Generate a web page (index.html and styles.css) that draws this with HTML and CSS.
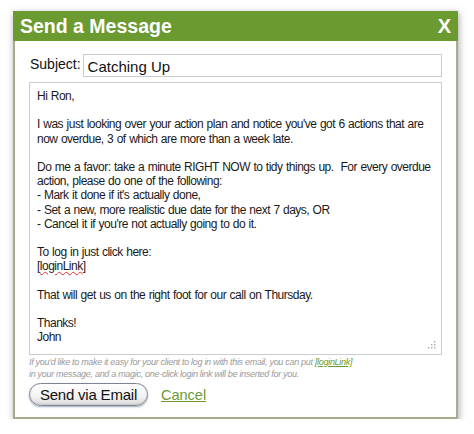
FILE: index.html
```html
<!DOCTYPE html>
<html lang="en">
<head>
    <meta charset="UTF-8">
    <title>Send a Message</title>
    <link rel="stylesheet" href="styles.css">
</head>
<body>

    <div class="dialog">
        <div class="dialog-header">
            <span class="dialog-title">Send a Message</span>
            <span class="dialog-close">X</span>
        </div>

        <div class="dialog-body">
            <div class="subject-row">
                <label class="subject-label">Subject:</label>
                <div class="subject-input">Catching Up</div>
            </div>

            <div class="message-box">
                <p>Hi Ron,</p>
                <p>I was just looking over your action plan and notice you've got 6 actions that are now overdue, 3 of which are more than a week late.</p>
                <p>Do me a favor: take a minute RIGHT NOW to tidy things up.&nbsp; For every overdue action, please do one of the following:<br>
                - Mark it done if it's actually done,<br>
                - Set a new, more realistic due date for the next 7 days, OR<br>
                - Cancel it if you're not actually going to do it.</p>
                <p>To log in just click here:<br>
                [<span class="misspelled">loginLink</span>]</p>
                <p>That will get us on the right foot for our call on Thursday.</p>
                <p>Thanks!<br>
                John</p>

                <!-- resize grip -->
                <svg class="grip" width="9" height="9" viewBox="0 0 9 9">
                    <rect x="7" y="1" width="1.4" height="1.4" fill="#aaa"/>
                    <rect x="4" y="4" width="1.4" height="1.4" fill="#aaa"/>
                    <rect x="7" y="4" width="1.4" height="1.4" fill="#aaa"/>
                    <rect x="1" y="7" width="1.4" height="1.4" fill="#aaa"/>
                    <rect x="4" y="7" width="1.4" height="1.4" fill="#aaa"/>
                    <rect x="7" y="7" width="1.4" height="1.4" fill="#aaa"/>
                </svg>
            </div>

            <div class="help-text">
                If you'd like to make it easy for your client to log in with this email, you can put <a href="#">[loginLink]</a><br>
                in your message, and a magic, one-click login link will be inserted for you.
            </div>

            <div class="actions">
                <button class="send-button">Send via Email</button>
                <a href="#" class="cancel-link">Cancel</a>
            </div>
        </div>
    </div>

</body>
</html>
```

FILE: styles.css
```css
body {
    font-family: Arial, "Liberation Sans", sans-serif;
    margin: 0;
    background-color: #fff;
    color: #1a1a1a;
}
.dialog {
    margin: 11px 0 0 13px;
    width: 445px;
    background-color: #fff;
    box-shadow: 1px 2px 7px rgba(0, 0, 0, 0.35);
}
.dialog-header {
    display: flex;
    justify-content: space-between;
    align-items: center;
    height: 30px;
    padding: 0 7px 0 7px;
    background-color: #6b9a31;
    color: #fff;
    font-weight: bold;
}
.dialog-title {
    font-size: 19.5px;
}
.dialog-close {
    font-size: 20px;
}
.dialog-body {
    border: 2px solid #a4ad8e;
    border-top: none;
    padding: 13px 14px 11px 14px;
}
.subject-row {
    display: flex;
    align-items: center;
    gap: 2px;
}
.subject-label {
    font-size: 14px;
    color: #111;
    margin-left: 1px;
    position: relative;
    top: -2px;
}
.subject-input {
    flex: 1;
    height: 21px;
    line-height: 23px;
    border: 1px solid #ccc;
    padding: 0 4px;
    font-size: 15px;
    color: #111;
}
.message-box {
    position: relative;
    margin-top: 5px;
    height: 259px;
    border: 1px solid #ccc;
    padding: 6px 7px 6px 7px;
    font-size: 12px;
    letter-spacing: -0.5px;
    word-spacing: 0.6px;
    line-height: 14.2px;
}
.message-box p {
    margin: 0 0 14.2px 0;
}
.misspelled {
    text-decoration: underline wavy #e03030;
    text-decoration-thickness: 1px;
}
.grip {
    position: absolute;
    right: 5px;
    bottom: 5px;
}
.help-text {
    margin-top: 1px;
    font-size: 9px;
    letter-spacing: -0.3px;
    font-style: italic;
    line-height: 12px;
    color: #999;
}
.help-text a {
    color: #6b9a31;
}
.actions {
    display: flex;
    align-items: center;
    gap: 13px;
    margin-top: 3px;
}
.send-button {
    width: 119px;
    height: 23px;
    padding: 0;
    font-family: Arial, "Liberation Sans", sans-serif;
    font-size: 15px;
    letter-spacing: -0.2px;
    color: #111;
    border: 1px solid #7d8595;
    border-radius: 12px;
    background: linear-gradient(#ffffff, #f2f2f2 60%, #dcdcdc);
    box-shadow: 0 1px 2px rgba(60, 70, 100, 0.45), inset 0 -1px 2px rgba(0, 0, 0, 0.1);
    cursor: pointer;
}
.cancel-link {
    font-size: 14.5px;
    color: #6b9a31;
}
```
